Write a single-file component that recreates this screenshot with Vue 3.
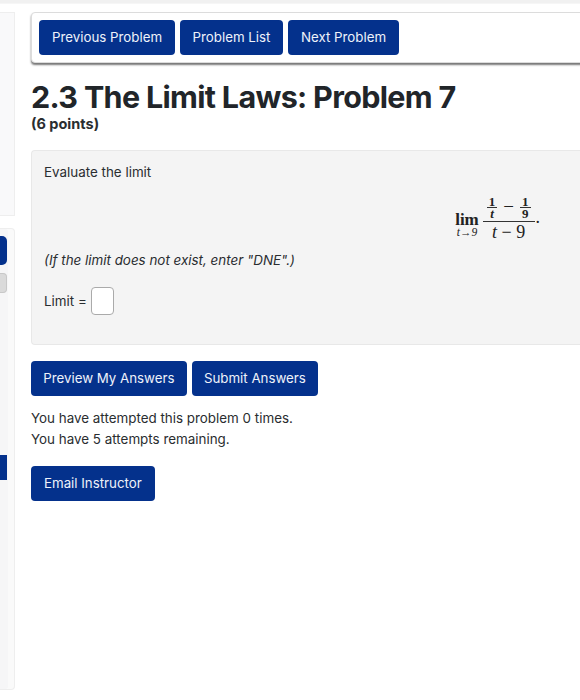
<script setup>
const navButtons = ['Previous Problem', 'Problem List', 'Next Problem']
const answerButtons = ['Preview My Answers', 'Submit Answers']
</script>

<template>
  <div class="page">
    <div class="topline"></div>
    <div class="layout">
      <aside class="side">
        <div class="side-top"></div>
        <div class="side-bottom">
          <div class="side-active"></div>
          <div class="side-grey"></div>
          <div class="side-square"></div>
        </div>
      </aside>
      <main class="main">
        <nav class="toolbar">
          <button v-for="b in navButtons" :key="b" class="btn">{{ b }}</button>
        </nav>
        <h1 class="title">2.3 The Limit Laws: Problem 7</h1>
        <div class="points">(6 points)</div>
        <section class="problem">
          <p class="intro">Evaluate the limit</p>
          <div class="math">
            <span class="lim"><span class="lim-word">lim</span><span class="lim-sub">t→9</span></span>
            <span class="frac big">
              <span class="num">
                <span class="frac small"><span class="snum">1</span><span class="sden"><i>t</i></span></span>
                <span class="minus">−</span>
                <span class="frac small"><span class="snum">1</span><span class="sden">9</span></span>
              </span>
              <span class="den"><i>t</i> − 9</span>
            </span>
            <span class="dot">.</span>
          </div>
          <p class="hint">(If the limit does not exist, enter "DNE".)</p>
          <div class="answer">
            <label for="limit">Limit =</label>
            <input id="limit" class="box" type="text" />
          </div>
        </section>
        <div class="actions">
          <button v-for="b in answerButtons" :key="b" class="btn tight">{{ b }}</button>
        </div>
        <p class="attempts">You have attempted this problem 0 times.<br />You have 5 attempts remaining.</p>
        <button class="btn email">Email Instructor</button>
      </main>
    </div>
  </div>
</template>

<style scoped>
.page {
  width: 580px;
  height: 700px;
  overflow: hidden;
  background: #fff;
  font-family: Inter, "Liberation Sans", sans-serif;
  color: #2a2d30;
  font-size: 13.4px;
}
.topline {
  height: 3px;
  background: #f1f1f1;
  border-bottom: 1px solid #f6f6f6;
}
.layout {
  display: flex;
  gap: 16px;
  padding-top: 8px;
}
.side {
  width: 15px;
  flex: none;
  display: flex;
  flex-direction: column;
  gap: 12px;
}
.side-top {
  height: 204px;
  background: #f9f9fa;
  border: 1px solid #eeeeee;
  border-left: 0;
  box-sizing: border-box;
}
.side-bottom {
  height: 462px;
  box-sizing: border-box;
  background: #f6f6f7;
  border: 1px solid #eeeeee;
  border-left: 0;
  border-radius: 0 4px 4px 0;
  box-shadow: inset -6px 0 0 #fafafa;
  padding-top: 7px;
  width: 15px;
}
.side-active {
  width: 7px;
  height: 29px;
  background: #04318c;
  border-radius: 0 5px 5px 0;
}
.side-grey {
  width: 7px;
  height: 20px;
  margin-top: 8px;
  box-sizing: border-box;
  background: #dadada;
  border: 1px solid #c8c8c8;
  border-left: 0;
  border-radius: 0 4px 4px 0;
}
.side-square {
  width: 7px;
  height: 25px;
  margin-top: 162px;
  background: #04318c;
}
.main {
  width: 560px;
  flex: none;
}
.toolbar {
  display: flex;
  gap: 4.5px;
  box-sizing: border-box;
  height: 51px;
  padding: 7px;
  background: #fff;
  border: 1px solid #dcdcdc;
  border-radius: 4px 0 0 4px;
  box-shadow: 0 2px 2px #777;
}
.btn {
  height: 35px;
  padding: 0 13px 2px;
  border: 0;
  border-radius: 4px;
  background: #04318c;
  color: #eef2fa;
  font: 400 13.3px Inter, "Liberation Sans", sans-serif;
  white-space: nowrap;
}
.tight {
  padding: 0 12.2px 2px;
}
.title {
  margin: 17px 0 0;
  font-size: 30.5px;
  line-height: 34px;
  font-weight: 700;
  letter-spacing: -0.68px;
  color: #212529;
}
.points {
  font-weight: 700;
  font-size: 14.5px;
  line-height: 20px;
}
.problem {
  box-sizing: border-box;
  height: 195px;
  margin-top: 16px;
  padding: 13px 12px 0;
  background: #f4f4f4;
  border: 1px solid #e8e8e8;
  border-right: 0;
  border-radius: 4px 0 0 4px;
}
.intro {
  margin: 0;
  line-height: 17px;
}
.math {
  display: flex;
  align-items: center;
  justify-content: flex-end;
  margin-top: 14px;
  padding-right: 39px;
  height: 48px;
  font-family: "Liberation Serif", "DejaVu Serif", serif;
  color: #222;
}
.lim {
  display: flex;
  flex-direction: column;
  align-items: center;
  margin-top: 11px;
}
.lim-word {
  font-size: 17px;
  line-height: 15px;
  font-weight: 700;
}
.lim-sub {
  font-size: 11.5px;
  line-height: 11px;
  font-style: italic;
}
.frac {
  display: inline-flex;
  flex-direction: column;
  align-items: center;
}
.big {
  margin-left: 4px;
}
.num {
  display: flex;
  align-items: center;
  gap: 6px;
  padding: 0 4px 2px;
  border-bottom: 1px solid #333;
}
.small {
  font-size: 13px;
  line-height: 11px;
  font-weight: 700;
}
.snum {
  border-bottom: 1px solid #333;
  padding: 0 2px;
}
.minus {
  font-size: 19px;
  line-height: 20px;
}
.den {
  font-size: 18px;
  line-height: 21px;
}
.dot {
  align-self: center;
  font-size: 18px;
  margin-left: 1px;
  margin-bottom: 3px;
}
.hint {
  margin: 9px 0 0;
  font-style: italic;
  line-height: 17px;
}
.answer {
  display: flex;
  align-items: center;
  gap: 4px;
  margin-top: 18px;
}
.box {
  box-sizing: border-box;
  width: 23px;
  height: 28px;
  padding: 0;
  background: #fff;
  border: 1px solid #aaa;
  border-radius: 4px;
}
.actions {
  display: flex;
  gap: 5px;
  margin-top: 16px;
}
.attempts {
  margin: 12px 0 0;
  line-height: 21px;
}
.email {
  display: block;
  margin-top: 16px;
}
</style>

<style>
html, body { margin: 0; background: #fff; }
</style>
